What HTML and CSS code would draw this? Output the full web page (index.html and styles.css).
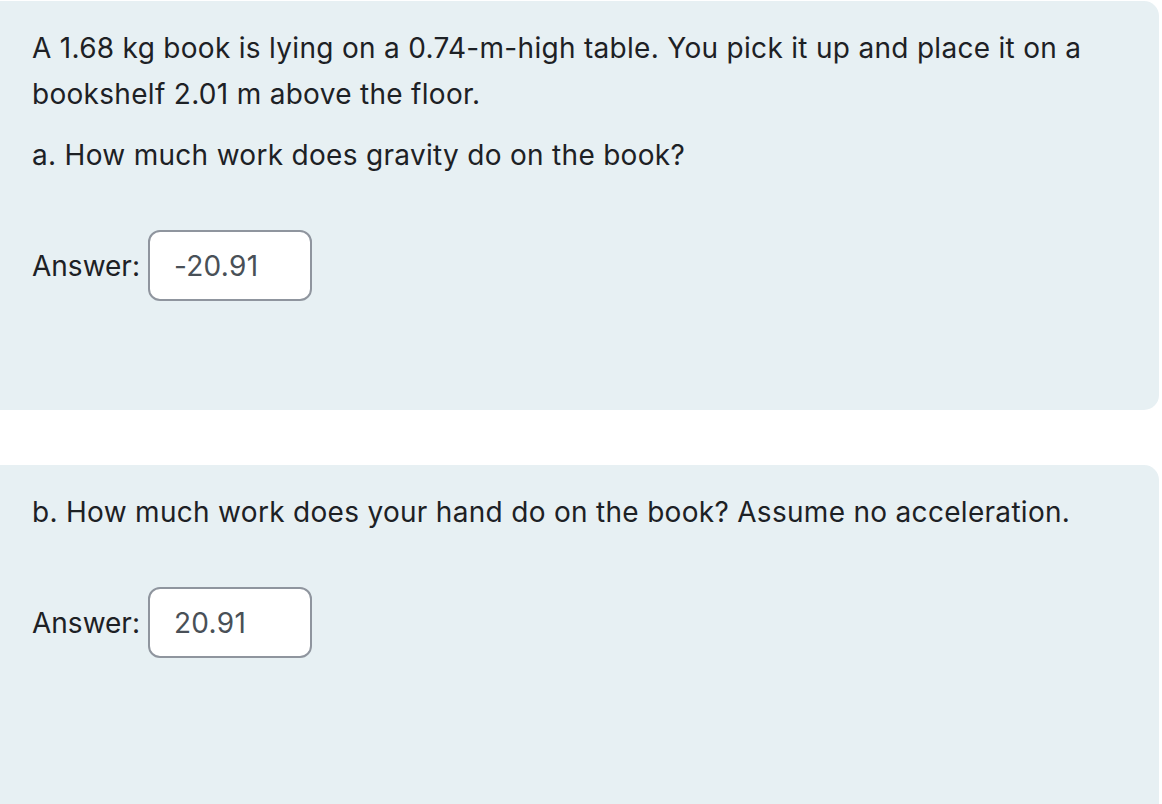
FILE: index.html
```html
<!DOCTYPE html>
<html>
<head>
<meta charset="utf-8">
<link rel="stylesheet" href="styles.css">
</head>
<body>
<div class="que first">
  <p class="qtext">A 1.68 kg book is lying on a 0.74-m-high table. You pick it up and place it on a bookshelf 2.01 m above the floor.</p>
  <p class="qtext">a. How much work does gravity do on the book?</p>
  <div class="answer">
    <label class="alabel">Answer:</label>
    <div class="ainput">-20.91</div>
  </div>
</div>
<div class="que second">
  <p class="qtext">b. How much work does your hand do on the book? Assume no acceleration.</p>
  <div class="answer">
    <label class="alabel">Answer:</label>
    <div class="ainput">20.91</div>
  </div>
</div>
</body>
</html>
```

FILE: styles.css
```css
html, body {
  margin: 0;
  padding: 0;
  background: #ffffff;
  overflow: hidden;
}
body {
  font-family: Inter, "Noto Sans", "Liberation Sans", sans-serif;
  font-size: 28px;
  letter-spacing: 0.3px;
  line-height: 46px;
  color: #1d2125;
  padding-top: 1px;
}
.que {
  background: #e7f0f3;
  border-radius: 15px;
  margin-left: -15px;
  width: 1174px;
  box-sizing: border-box;
  padding: 24px 60px 0 47px;
}
.first {
  height: 409px;
}
.second {
  margin-top: 55px;
  height: 400px;
}
.qtext {
  margin: 0 0 15px 0;
}
.answer {
  display: flex;
  align-items: center;
  gap: 8px;
  margin-top: 52px;
}
.alabel {
  display: block;
  letter-spacing: 0;
}
.ainput {
  width: 164px;
  height: 71px;
  box-sizing: border-box;
  border: 2px solid #8f959e;
  border-radius: 12px;
  background: #ffffff;
  color: #495057;
  padding-left: 24px;
  display: flex;
  align-items: center;
}
```
